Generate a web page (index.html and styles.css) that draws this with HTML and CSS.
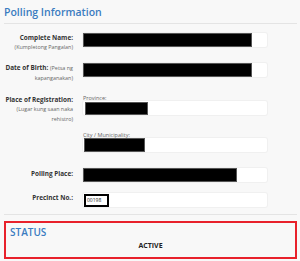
FILE: index.html
```html
<!DOCTYPE html>
<html>
<head>
    <meta charset="utf-8">
    <title>Polling Information</title>
    <link rel="stylesheet" href="styles.css">
</head>
<body>
<article class="panel">
    <h2 class="title">Polling Information</h2>
    <div class="form">
        <div class="row row-name">
            <div class="label"><b>Complete Name:</b><br><span class="sub">(Kumpletong Pangalan)</span></div>
            <div class="field"><div class="box"><span class="redact r-name"></span></div></div>
        </div>
        <div class="row row-birth">
            <div class="label"><b>Date of Birth:</b> <span class="sub">(Petsa ng<br>kapanganakan)</span></div>
            <div class="field"><div class="box"><span class="redact r-birth"></span></div></div>
        </div>
        <div class="row row-place">
            <div class="label"><b>Place of Registration:</b><br><span class="sub">(Lugar kung saan naka<br>rehistro)</span></div>
            <div class="field">
                <div class="hint">Province:</div>
                <div class="box"><span class="redact r-prov"></span></div>
                <div class="hint hint-city">City / Municipality:</div>
                <div class="box"><span class="redact r-city"></span></div>
            </div>
        </div>
        <div class="row row-poll">
            <div class="label"><b>Polling Place:</b></div>
            <div class="field"><div class="box"><span class="redact r-poll"></span></div></div>
        </div>
        <div class="row row-precinct">
            <div class="label"><b>Precinct No.:</b></div>
            <div class="field"><div class="box"><span class="precinct">00198</span></div></div>
        </div>
    </div>
    <section class="status">
        <h3>STATUS</h3>
        <p>ACTIVE</p>
    </section>
</article>
</body>
</html>
```
FILE: styles.css
```css
html, body {
    margin: 0;
    padding: 0;
    background-color: #f8f8f8;
}

body {
    font-family: "Open Sans", "DejaVu Sans", sans-serif;
    color: #333;
}

.panel {
    padding: 0 3px 0 4px;
}

.title {
    margin: 0;
    padding-top: 5px;
    height: 18px;
    font-size: 10.5px;
    line-height: 14px;
    font-weight: 600;
    color: #3a7cc0;
    border-bottom: 1px solid #e4e4e4;
}

.form {
    border-bottom: 1px solid #e4e4e4;
    padding-bottom: 7px;
}

.row {
    display: grid;
    grid-template-columns: 69px 184px;
    column-gap: 10px;
}

.row-name { margin-top: 9px; }
.row-birth { margin-top: 11px; }
.row-place { margin-top: 12px; }
.row-poll { margin-top: 16px; }
.row-precinct { margin-top: 11px; }

.label {
    text-align: right;
    font-size: 6.4px;
    line-height: 9px;
    color: #333;
    white-space: nowrap;
}

.label b {
    font-weight: 700;
}

.sub {
    font-size: 5.4px;
    color: #666;
}

.row-poll .label { padding-top: 1px; }

.hint {
    font-size: 5.5px;
    line-height: 6px;
    color: #666;
}

.hint-city {
    margin-top: 17px;
}

.box {
    display: flex;
    align-items: center;
    height: 14px;
    background-color: #fff;
    border-radius: 2px;
    box-shadow: 0 0 0 1px #f0f0f0;
}

.redact {
    display: block;
    height: 14px;
    background-color: #000;
    box-shadow: inset 0 0 0 1px #555;
}

.r-name { width: 169px; }
.r-birth { width: 169px; }
.r-prov { width: 63px; margin-left: 2px; height: 13px; }
.r-city { width: 61px; margin-left: 1px; }
.r-poll { width: 154px; }

.precinct {
    display: block;
    margin-left: 1px;
    width: 20px;
    height: 9px;
    border: 2px solid #000;
    background-color: #fff;
    font-size: 5px;
    line-height: 9px;
    padding-left: 1px;
    color: #222;
}

.status {
    margin-top: 6px;
    height: 34px;
    border: 2px solid #e8212b;
    padding: 0 4px;
}

.status h3 {
    margin: 0;
    padding-top: 2px;
    font-size: 10px;
    line-height: 14px;
    font-weight: 600;
    color: #3a7cc0;
}

.status p {
    margin: 2px 0 0;
    text-align: center;
    font-size: 7px;
    font-weight: 700;
    color: #222;
}
```
